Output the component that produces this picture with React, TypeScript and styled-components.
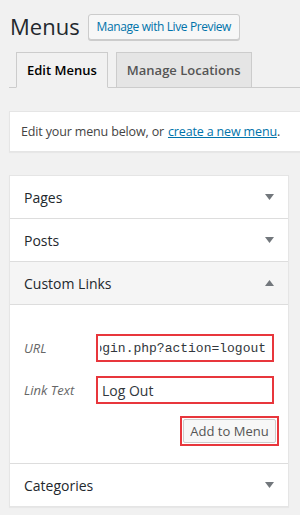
import React, { useEffect, useRef } from 'react';
import styled, { createGlobalStyle } from 'styled-components';

const GlobalStyle = createGlobalStyle`
  html, body {
    margin: 0;
    padding: 0;
    background: #f1f1f1;
    overflow: hidden;
  }
  body {
    font-family: "Segoe UI", "Open Sans", "Noto Sans", sans-serif;
    color: #23282d;
  }
`;

const Page = styled.div`
  width: 300px;
  height: 515px;
  padding: 12px 0 0 9px;
  box-sizing: border-box;
  overflow: hidden;
`;

const HeaderRow = styled.div`
  display: flex;
  align-items: center;
  gap: 8px;
  height: 28px;
`;

const Title = styled.h1`
  margin: 0 0 0 1px;
  font-size: 22px;
  font-weight: 400;
  line-height: 28px;
  color: #23282d;
`;

const PreviewButton = styled.button`
  height: 26px;
  padding: 0 8px;
  border: 1px solid #ccc;
  border-radius: 3px;
  background: #f7f7f7;
  color: #0073aa;
  font-family: inherit;
  font-size: 12px;
  letter-spacing: -0.4px;
  box-shadow: 0 1px 0 #ccc;
  margin-top: 1px;
`;

const TabBar = styled.div`
  display: flex;
  gap: 8px;
  margin-top: 12px;
  padding-left: 7px;
  border-bottom: 1px solid #ccc;
  height: 35px;
`;

const Tab = styled.div<{ $active?: boolean }>`
  display: flex;
  align-items: center;
  padding: 0 10px;
  box-sizing: border-box;
  border: 1px solid #ccc;
  border-bottom: ${p => (p.$active ? '1px solid #f1f1f1' : 'none')};
  background: ${p => (p.$active ? '#f1f1f1' : '#e5e5e5')};
  color: ${p => (p.$active ? '#000' : '#555')};
  font-size: 13px;
  font-weight: 600;
  margin-bottom: ${p => (p.$active ? '-1px' : '0')};
  height: ${p => (p.$active ? '36px' : '35px')};
`;

const Notice = styled.div`
  margin-top: 23px;
  margin-right: -20px;
  height: 39px;
  display: flex;
  align-items: center;
  padding-left: 11px;
  background: #fff;
  border: 1px solid #e5e5e5;
  box-shadow: 0 1px 1px rgba(0, 0, 0, 0.04);
  font-size: 12.5px;
  letter-spacing: -0.15px;
  color: #444;
`;

const Link = styled.a`
  color: #0073aa;
  text-decoration: underline;
  margin-left: 4px;
`;

const Panel = styled.div`
  margin-top: 23px;
  width: 280px;
  box-sizing: border-box;
  background: #fff;
  border: 1px solid #e5e5e5;
  box-shadow: 0 1px 1px rgba(0, 0, 0, 0.04);
`;

const SectionHeader = styled.div<{ $open?: boolean; $last?: boolean }>`
  display: flex;
  align-items: center;
  justify-content: space-between;
  height: 42px;
  padding: 0 14px;
  background: ${p => (p.$open ? '#f5f5f5' : '#fff')};
  border-bottom: ${p => (p.$last ? 'none' : '1px solid #ddd')};
  font-size: 14px;
  color: #23282d;
`;

const Arrow = styled.svg`
  width: 9px;
  height: 6px;
  fill: #72777c;
`;

const SectionBody = styled.div`
  padding: 29px 12px 17px 14px;
  border-bottom: 1px solid #ddd;
  display: flex;
  flex-direction: column;
  gap: 14px;
`;

const FieldRow = styled.div`
  display: flex;
  align-items: center;
`;

const Label = styled.span`
  width: 72px;
  font-size: 13px;
  font-style: italic;
  color: #666;
`;

const Field = styled.input<{ $mono?: boolean }>`
  width: 178px;
  height: 28px;
  box-sizing: border-box;
  margin: 0;
  border: 2px solid #e8363c;
  outline: none;
  background: #fff;
  padding: ${p => (p.$mono ? '0 6px 0 2px' : '0 4px')};
  font-family: ${p =>
    p.$mono
      ? '"Liberation Mono", "DejaVu Sans Mono", monospace'
      : '"Segoe UI", "Open Sans", "Noto Sans", sans-serif'};
  font-size: ${p => (p.$mono ? '13px' : '14px')};
  color: #32373c;
`;

const ButtonRow = styled.div`
  display: flex;
  justify-content: flex-end;
  margin-top: -2px;
  margin-right: -3px;
`;

const ButtonFrame = styled.div`
  width: 99px;
  height: 30px;
  box-sizing: border-box;
  border: 2px solid #e8363c;
  padding: 1px;
  display: flex;
`;

const AddButton = styled.button`
  flex: 1;
  border: 1px solid #ccc;
  border-radius: 2px;
  background: #f7f7f7;
  color: #555;
  font-family: inherit;
  font-size: 13px;
  padding: 0;
`;

const Down = () => (
  <Arrow viewBox="0 0 9 6">
    <polygon points="0,0 9,0 4.5,6" />
  </Arrow>
);

const Up = () => (
  <Arrow viewBox="0 0 9 6">
    <polygon points="0,6 9,6 4.5,0" />
  </Arrow>
);

const App: React.FC = () => {
  const urlRef = useRef<HTMLInputElement>(null);

  useEffect(() => {
    // the field shows the end of the long url, as after typing it
    const el = urlRef.current;
    if (el) el.scrollLeft = el.scrollWidth;
  }, []);

  return (
    <Page>
      <GlobalStyle />
      <HeaderRow>
        <Title>Menus</Title>
        <PreviewButton>Manage with Live Preview</PreviewButton>
      </HeaderRow>

      <TabBar>
        <Tab $active>Edit Menus</Tab>
        <Tab>Manage Locations</Tab>
      </TabBar>

      <Notice>
        Edit your menu below, or<Link href="#">create a new menu</Link>.
      </Notice>

      <Panel>
        <SectionHeader>
          Pages <Down />
        </SectionHeader>
        <SectionHeader>
          Posts <Down />
        </SectionHeader>
        <SectionHeader $open>
          Custom Links <Up />
        </SectionHeader>
        <SectionBody>
          <FieldRow>
            <Label>URL</Label>
            <Field
              ref={urlRef}
              $mono
              readOnly
              value="http://example.com/wp-login.php?action=logout"
            />
          </FieldRow>
          <FieldRow>
            <Label>Link Text</Label>
            <Field readOnly value="Log Out" />
          </FieldRow>
          <ButtonRow>
            <ButtonFrame>
              <AddButton>Add to Menu</AddButton>
            </ButtonFrame>
          </ButtonRow>
        </SectionBody>
        <SectionHeader $last>
          Categories <Down />
        </SectionHeader>
      </Panel>
    </Page>
  );
};

export default App;
